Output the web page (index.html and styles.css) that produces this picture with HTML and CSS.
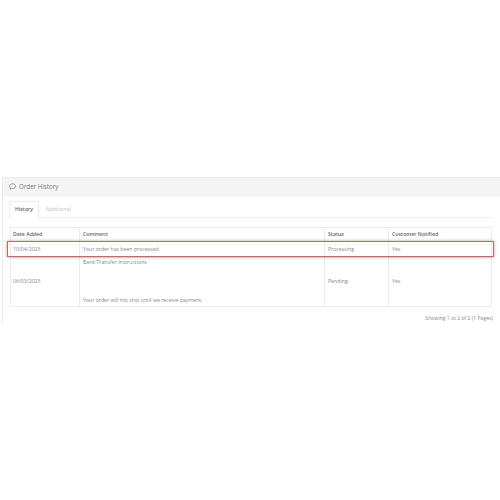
FILE: index.html
```html
<!DOCTYPE html>
<html lang="en">
<head>
    <meta charset="UTF-8">
    <title>Order History</title>
    <link rel="stylesheet" href="styles.css">
</head>
<body>
    <div class="panel">
        <div class="panel-heading">
            <svg class="icon" viewBox="0 0 12 12" width="7" height="7">
                <path d="M6 1.500C3 1.500 1 3.200 1 5.500c0 1.200.6 2.200 1.500 2.900L2 10.500l2.400-1.200c.5.1 1 .2 1.600.2 3 0 5-1.800 5-4S9 1.500 6 1.500z" fill="none" stroke="#666" stroke-width="1.100"/>
            </svg>
            <span>Order History</span>
        </div>
        <div class="panel-body">
            <ul class="tabs">
                <li class="tab active">History</li>
                <li class="tab">Additional</li>
            </ul>
            <div class="table-wrap">
                <table class="history">
                    <thead>
                        <tr>
                            <th class="col-date">Date Added</th>
                            <th class="col-comment">Comment</th>
                            <th class="col-status">Status</th>
                            <th>Customer Notified</th>
                        </tr>
                    </thead>
                    <tbody>
                        <tr class="row-first">
                            <td>10/04/2023</td>
                            <td>Your order has been processed.</td>
                            <td>Processing</td>
                            <td>Yes</td>
                        </tr>
                        <tr class="row-second">
                            <td>06/03/2023</td>
                            <td class="comment-cell">
                                <span>Bank Transfer Instructions</span>
                                <span>Your order will not ship until we receive payment.</span>
                            </td>
                            <td>Pending</td>
                            <td>Yes</td>
                        </tr>
                    </tbody>
                </table>
                <div class="highlight"></div>
            </div>
            <div class="pager">Showing 1 to 2 of 2 (1 Pages)</div>
        </div>
    </div>
</body>
</html>
```

FILE: styles.css
```css
body {
    margin: 0;
    padding: 177px 0 0 2px;
    background: #fff;
    font-family: "Open Sans", sans-serif;
    color: #888;
}
.panel {
    border-top: 1px solid #ececec;
    border-left: 1px solid #ececec;
    height: 146px;
}
.panel-heading {
    display: flex;
    align-items: center;
    gap: 3px;
    height: 17px;
    padding-left: 6px;
    background: #f5f5f5;
    border-bottom: 1px solid #efefef;
    font-size: 6.200px;
    color: #777;
}
.panel-body {
    padding: 5px 7px 0 7px;
}
.tabs {
    display: flex;
    list-style: none;
    margin: 0 0 9px 0;
    padding: 0;
    height: 16px;
    border-bottom: 1px solid #ececec;
}
.tab {
    padding: 0 6px;
    line-height: 16px;
    font-size: 5.200px;
    color: #bbb;
}
.tab.active {
    color: #666;
    font-weight: 600;
    background: #fff;
    border: 1px solid #ececec;
    border-bottom: none;
    height: 16px;
    line-height: 15px;
    margin-left: -1px;
    margin-right: 1px;
    padding: 0 5px;
}
.table-wrap {
    position: relative;
}
.history {
    width: 482px;
    border-collapse: collapse;
    table-layout: fixed;
    font-size: 5.200px;
}
.history th, .history td {
    border: 1px solid #ececec;
    padding: 0 3px 2px 3px;
    text-align: left;
}
.history th:first-child, .history td:first-child {
    padding-left: 2px;
}
.history th {
    height: 11px;
    color: #666;
    font-weight: 600;
}
.col-date {
    width: 63px;
}
.col-comment {
    width: 238px;
}
.col-status {
    width: 57px;
}
.row-first td {
    height: 13px;
}
.row-second td {
    height: 46px;
}
.comment-cell span {
    display: block;
}
.comment-cell span + span {
    margin-top: 30px;
}
.highlight {
    position: absolute;
    left: -3px;
    top: 14px;
    width: 485px;
    height: 14px;
    border: 1px solid #bd6a70;
    box-shadow: 0 0 3px rgba(150, 70, 70, 0.55);
}
.pager {
    margin-top: 8px;
    text-align: right;
    font-size: 5.100px;
    color: #888;
}
```
